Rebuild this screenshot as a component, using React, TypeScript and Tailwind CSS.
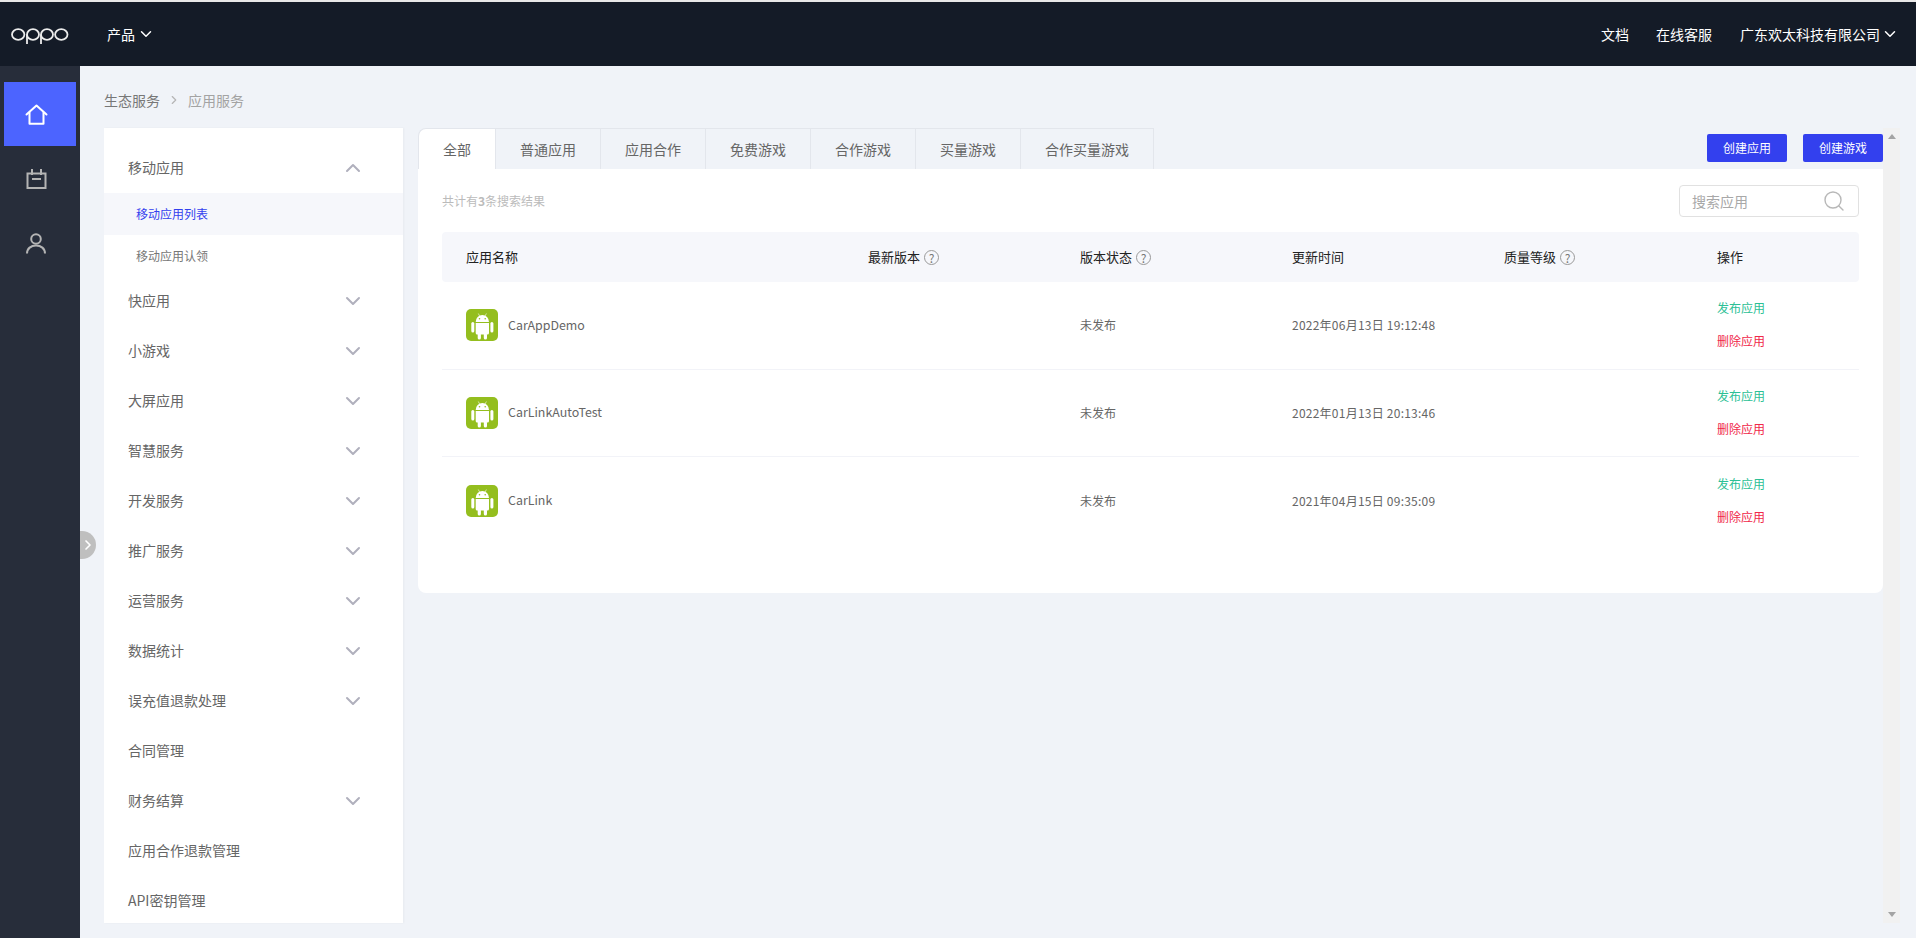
import { ChevronDown, ChevronUp, ChevronRight, Search } from 'lucide-react';

const font = { fontFamily: '"Noto Sans CJK SC", "Noto Sans", sans-serif' };

const menu = [
  { name: '快应用', arrow: true },
  { name: '小游戏', arrow: true },
  { name: '大屏应用', arrow: true },
  { name: '智慧服务', arrow: true },
  { name: '开发服务', arrow: true },
  { name: '推广服务', arrow: true },
  { name: '运营服务', arrow: true },
  { name: '数据统计', arrow: true },
  { name: '误充值退款处理', arrow: true },
  { name: '合同管理', arrow: false },
  { name: '财务结算', arrow: true },
  { name: '应用合作退款管理', arrow: false },
  { name: 'API密钥管理', arrow: false },
];

const tabs = ['普通应用', '应用合作', '免费游戏', '合作游戏', '买量游戏', '合作买量游戏'];

const apps = [
  { name: 'CarAppDemo', time: '2022年06月13日 19:12:48' },
  { name: 'CarLinkAutoTest', time: '2022年01月13日 20:13:46' },
  { name: 'CarLink', time: '2021年04月15日 09:35:09' },
];

function OppoLogo() {
  return (
    <svg width="58" height="16" viewBox="0 0 58 16" fill="none" stroke="#ececec" strokeWidth="1.8">
      <ellipse cx="7.200" cy="6.500" rx="6.200" ry="5.300" />
      <ellipse cx="22" cy="6.500" rx="6" ry="5.300" />
      <path d="M16 6.500V16" />
      <ellipse cx="36" cy="6.500" rx="6" ry="5.300" />
      <path d="M30 6.500V16" />
      <ellipse cx="50.300" cy="6.500" rx="6.200" ry="5.300" />
    </svg>
  );
}

function HomeIcon() {
  return (
    <svg width="23" height="21" viewBox="0 0 23 21" fill="none" stroke="#fff" strokeWidth="2" strokeLinejoin="round" strokeLinecap="round">
      <path d="M1.500 10.500 11.500 1.500 21.500 10.500" />
      <path d="M4.500 8.500V19.800h14V8.500" />
    </svg>
  );
}

function CalendarIcon() {
  return (
    <svg width="21" height="20" viewBox="0 0 21 20" fill="none" stroke="#b4b4b4" strokeWidth="2">
      <path d="M1.500 4.500h18v14.500h-18z" />
      <path d="M6 0v6M15 0v6M6 10h9" />
    </svg>
  );
}

function UserIcon() {
  return (
    <svg width="20" height="21" viewBox="0 0 20 21" fill="none" stroke="#b4b4b4" strokeWidth="2">
      <circle cx="10" cy="6" r="4.800" />
      <path d="M1 20.500c0-5 4-8 9-8s9 3 9 8" />
    </svg>
  );
}

function AndroidIcon() {
  return (
    <svg width="32" height="32" viewBox="0 0 32 32" className="shrink-0">
      <rect width="32" height="32" rx="5" fill="#94be1e" />
      <path d="M9.700 13a6.650 7 0 0 1 13.300 0z" fill="#fff" />
      <path d="M12.300 4.500l1.300 2.500M20.400 4.500l-1.300 2.500" stroke="#fff" strokeWidth="0.6" />
      <circle cx="13.500" cy="9.800" r="0.800" fill="#94be1e" />
      <circle cx="19.200" cy="9.800" r="0.800" fill="#94be1e" />
      <path d="M9.700 14h13.300v10a1.500 1.500 0 0 1-1.500 1.500H11.200a1.500 1.500 0 0 1-1.500-1.500z" fill="#fff" />
      <rect x="5.300" y="13" width="3" height="10.500" rx="1.500" fill="#fff" />
      <rect x="24.400" y="13" width="3" height="10.500" rx="1.500" fill="#fff" />
      <rect x="11.700" y="24" width="3.200" height="6.500" rx="1.600" fill="#fff" />
      <rect x="17.800" y="24" width="3.200" height="6.500" rx="1.600" fill="#fff" />
    </svg>
  );
}

function Help() {
  return (
    <span className="w-[15px] h-[15px] rounded-full border border-[#999] text-[#777] text-[12px] leading-[13px] text-center inline-block">
      ?
    </span>
  );
}

export default function App() {
  return (
    <div className="w-[1916px] h-[938px] overflow-hidden flex flex-col bg-[#f0f3f8] relative" style={font}>
      <div className="h-[2px] bg-[#e8e8e8]" />

      {/* top bar */}
      <header className="h-[64px] bg-[#141b27] flex items-center text-white text-[14px]">
        <div className="w-[107px] pl-[11px] pt-[4px]">
          <OppoLogo />
        </div>
        <div className="flex items-center gap-[2px]">
          <span>产品</span>
          <ChevronDown size={18} strokeWidth={2} />
        </div>
        <div className="ml-auto flex items-center pr-[17px]">
          <span className="mr-[27px]">文档</span>
          <span className="mr-[28px]">在线客服</span>
          <span className="mr-[1px]">广东欢太科技有限公司</span>
          <ChevronDown size={18} strokeWidth={2} />
        </div>
      </header>

      <div className="flex flex-1 min-h-0 relative">
        {/* icon rail */}
        <aside className="w-[80px] bg-[#272d3a] shrink-0 pt-[16px] px-[4px]">
          <div className="h-[64px] bg-[#4c64ff] flex items-center justify-center pr-[8px]">
            <HomeIcon />
          </div>
          <div className="h-[64px] mt-[1px] flex items-center justify-center pr-[8px]">
            <CalendarIcon />
          </div>
          <div className="h-[64px] flex items-center justify-center pr-[8px]">
            <UserIcon />
          </div>
        </aside>

        {/* collapse handle */}
        <div className="absolute left-[80px] top-[465px] w-[16px] h-[28px] bg-[#bfbfbf] rounded-r-full flex items-center justify-center text-white">
          <ChevronRight size={16} strokeWidth={2.5} />
        </div>

        <main className="flex-1 min-w-0 pl-[24px]">
          <div className="h-[62px] pt-[23px] flex items-start text-[14px] leading-[22px] text-[#8b8b8b]">
            <span className="text-[#777]">生态服务</span>
            <ChevronRight size={14} className="mx-[7px] mt-[4px] text-[#b5b5b5]" />
            <span className="text-[#a3a3a3]">应用服务</span>
          </div>

          <div className="flex items-start">
            {/* side menu */}
            <nav className="w-[299px] h-[795px] bg-white overflow-hidden pt-[15px] text-[14px] text-[#666] shrink-0 shadow-[1px_0_2px_rgba(0,0,0,0.04)]">
              <div className="h-[50px] pl-[24px] pr-[38px] flex items-center justify-between">
                <span className="pb-[1px]">移动应用</span>
                <ChevronUp size={24} strokeWidth={2} className="text-[#b0b0bd]" />
              </div>
              <div className="h-[42px] pl-[32px] flex items-center text-[12px] text-[#3340ee] bg-[#f6f7fb]">移动应用列表</div>
              <div className="h-[42px] pl-[32px] flex items-center text-[12px] text-[#777]">移动应用认领</div>
              {menu.map((item) => (
                <div key={item.name} className="h-[50px] pl-[24px] pr-[38px] pb-[2px] flex items-center justify-between">
                  <span className="pb-[1px]">{item.name}</span>
                  {item.arrow && <ChevronDown size={24} strokeWidth={2} className="text-[#b0b0bd]" />}
                </div>
              ))}
            </nav>

            <div className="w-[1465px] ml-[15px] shrink-0">
              {/* tabs and buttons */}
              <div className="h-[41px] flex justify-between">
                <div className="flex text-[14px] text-[#666]">
                  <div className="w-[77px] h-[41px] bg-white border-t border-l border-[#e3e6ec] rounded-tl-[8px] flex items-center justify-center">全部</div>
                  {tabs.map((tab) => (
                    <div key={tab} className="h-[41px] px-[24px] border-t border-l border-[#e3e6ec] last:border-r flex items-center">
                      {tab}
                    </div>
                  ))}
                </div>
                <div className="flex gap-[16px] pt-[6px]">
                  <button className="w-[80px] h-[28px] rounded-[2px] bg-[#3340ee] text-white text-[12px]">创建应用</button>
                  <button className="w-[80px] h-[28px] rounded-[2px] bg-[#3340ee] text-white text-[12px]">创建游戏</button>
                </div>
              </div>

              {/* list card */}
              <section className="h-[424px] bg-white rounded-b-[8px] px-[24px] pt-[16px]">
                <div className="h-[32px] flex items-center justify-between">
                  <span className="text-[12px] text-[#bbb]">
                    共计有<b>3</b>条搜索结果
                  </span>
                  <div className="w-[180px] h-[32px] border border-[#e1e1e1] rounded-[4px] flex items-center justify-between pl-[12px] pr-[12px] text-[14px] text-[#a8a8a8]">
                    <span>搜索应用</span>
                    <Search size={24} strokeWidth={1.4} className="text-[#b8b8b8]" />
                  </div>
                </div>

                <div className="mt-[15px] h-[50px] bg-[#f6f7fb] rounded-[4px] pl-[24px] grid grid-cols-[402px_212px_212px_212px_213px_1fr] items-center text-[13px] text-[#222]">
                  <span>应用名称</span>
                  <span className="flex items-center gap-[4px]">最新版本 <Help /></span>
                  <span className="flex items-center gap-[4px]">版本状态 <Help /></span>
                  <span>更新时间</span>
                  <span className="flex items-center gap-[4px]">质量等级 <Help /></span>
                  <span>操作</span>
                </div>

                {apps.map((app) => (
                  <div
                    key={app.name}
                    className="h-[87.5px] pl-[24px] border-b border-[#f2f3f8] last:border-b-0 grid grid-cols-[402px_212px_212px_212px_213px_1fr] items-center text-[12px] text-[#666]"
                  >
                    <div className="flex items-center gap-[10px]">
                      <AndroidIcon />
                      <span className="text-[12.4px]">{app.name}</span>
                    </div>
                    <span />
                    <span>未发布</span>
                    <span className="tracking-[0.24px]">{app.time}</span>
                    <span />
                    <div className="flex flex-col gap-[16px] pb-[2px]">
                      <span className="leading-[17px] text-[#2cc095]">发布应用</span>
                      <span className="leading-[17px] text-[#f0284a]">删除应用</span>
                    </div>
                  </div>
                ))}
              </section>
            </div>

            {/* page scrollbar */}
            <div className="w-[17px] h-[795px] bg-[#f1f1f1] shrink-0 flex flex-col items-center justify-between py-[6px]">
              <div className="w-0 h-0 border-x-[4px] border-x-transparent border-b-[5px] border-b-[#a3a3a3]" />
              <div className="w-0 h-0 border-x-[4px] border-x-transparent border-t-[5px] border-t-[#a3a3a3]" />
            </div>
          </div>
        </main>
      </div>
    </div>
  );
}
